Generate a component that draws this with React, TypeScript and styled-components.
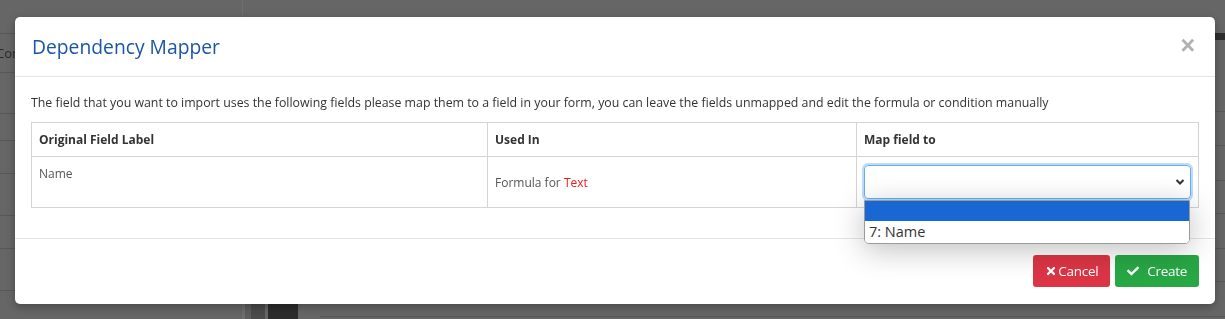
import React from 'react'
import styled, { createGlobalStyle } from 'styled-components'
import { FaTimes, FaCheck } from 'react-icons/fa'

const GlobalStyle = createGlobalStyle`
  html, body {
    margin: 0;
    padding: 0;
    background: #666;
    overflow: hidden;
  }
  body {
    font-family: "Open Sans", "Noto Sans", sans-serif;
    font-size: 12px;
    color: #333;
  }
  * { box-sizing: border-box; }
`

const leftRows = [39, 41, 27, 33, 42, 33, 42, 30]
const rightRows = [34, 35, 33, 35, 33, 35]

const App = () => {
  return (
    <>
      <GlobalStyle />
      <Page>
        <Sidebar>
          {leftRows.map((h, i) => (
            <SideRow key={i} $h={h}>{i === 0 ? 'Con' : ''}</SideRow>
          ))}
        </Sidebar>
        <Middle>
          <Blocks>
            <Block $w={2} $c="#6e6e6e" />
            <Block $w={6} $c="#5d5d5d" />
            <Block $w={14} $c="#4b4b4b" />
            <Block $w={3} $c="#666" />
            <Block $w={30} $c="#2c2c2c" />
          </Blocks>
        </Middle>
        <Main>
          <TopBar />
          <RightList>
            {rightRows.map((h, i) => (
              <RightRow key={i} $h={h} />
            ))}
          </RightList>
          <BottomLine />
        </Main>
      </Page>

      <Modal>
        <Header>
          <Title>Dependency Mapper</Title>
          <Close>×</Close>
        </Header>

        <Body>
          <Intro>
            The field that you want to import uses the following fields please map them to a field in your form, you can leave the fields unmapped and edit the formula or condition manually
          </Intro>

          <Table>
            <thead>
              <tr>
                <Th style={{ width: 456 }}>Original Field Label</Th>
                <Th style={{ width: 369 }}>Used In</Th>
                <Th>Map field to</Th>
              </tr>
            </thead>
            <tbody>
              <tr>
                <Td $align="top">Name</Td>
                <Td $align="middle">Formula for <Red>Text</Red></Td>
                <Td $align="top">
                  <SelectWrap>
                    <SelectBox>
                      <svg width="10" height="8" viewBox="0 0 10 8">
                        <path d="M1.5 2 L5 5.5 L8.5 2" fill="none" stroke="#333" strokeWidth="2" />
                      </svg>
                    </SelectBox>
                    <OptionList>
                      <Option $active />
                      <Option>7: Name</Option>
                    </OptionList>
                  </SelectWrap>
                </Td>
              </tr>
            </tbody>
          </Table>
        </Body>

        <Footer>
          <Button $color="#dc3545">
            <FaTimes size={12} />Cancel
          </Button>
          <Button $color="#28a745">
            <FaCheck size={12} style={{ marginRight: 7 }} />Create
          </Button>
        </Footer>
      </Modal>
    </>
  )
}

const Page = styled.div`
  display: flex;
  height: 319px;
  width: 1225px;
  background: #666;
`

const Sidebar = styled.div`
  width: 243px;
  padding-top: 33px;
  border-right: 1px solid #6e6e6e;
`

const SideRow = styled.div<{ $h: number }>`
  height: ${p => p.$h}px;
  border-top: 1px solid #585858;
  color: #2a2a2a;
  font-size: 13px;
  line-height: ${p => p.$h}px;
  padding-left: 0;
  margin-left: -4px;
`

const Middle = styled.div`
  width: 77px;
  display: flex;
  align-items: flex-end;
`

const Blocks = styled.div`
  display: flex;
  height: 15px;
`

const Block = styled.div<{ $w: number; $c: string }>`
  width: ${p => p.$w}px;
  background: ${p => p.$c};
`

const Main = styled.div`
  flex: 1;
  display: flex;
  flex-direction: column;
`

const TopBar = styled.div`
  margin-top: 33px;
  height: 9px;
  background: #2e2e2e;
`

const RightList = styled.div`
  margin-top: 71px;
  flex: 1;
`

const RightRow = styled.div<{ $h: number }>`
  height: ${p => p.$h}px;
  border-top: 1px solid #585858;
`

const BottomLine = styled.div`
  height: 2px;
  margin-bottom: 1px;
  border-top: 1px solid #555;
`

const Modal = styled.div`
  position: fixed;
  top: 17px;
  left: 15px;
  width: 1200px;
  height: 287px;
  background: #fff;
  border-radius: 5px;
  box-shadow: 0 3px 9px rgba(0, 0, 0, 0.3);
  display: flex;
  flex-direction: column;
`

const Header = styled.div`
  height: 60px;
  padding: 0 17px;
  display: flex;
  align-items: center;
  justify-content: space-between;
  border-bottom: 1px solid #e5e5e5;
`

const Title = styled.h4`
  margin: 0;
  font-size: 19.3px;
  font-weight: 400;
  color: #1a55a6;
`

const Close = styled.span`
  font-family: "Liberation Sans", Arial, sans-serif;
  font-size: 25px;
  font-weight: 700;
  color: #b0b0b0;
  line-height: 1;
  margin-top: -2px;
  margin-right: 3px;
`

const Body = styled.div`
  padding: 17px 16px 30px 16px;
  border-bottom: 1px solid #e5e5e5;
`

const Intro = styled.p`
  margin: 0 0 11px 0;
  line-height: 17px;
  white-space: nowrap;
  font-size: 12.35px;
`

const Table = styled.table`
  width: 1168px;
  border-collapse: collapse;
  border: 1px solid #d4d4d4;
`

const Th = styled.th`
  text-align: left;
  font-weight: 700;
  padding: 8px 7px;
  line-height: 17px;
  border: 1px solid #d4d4d4;
`

const Td = styled.td<{ $align: 'top' | 'middle' }>`
  vertical-align: ${p => p.$align};
  padding: 8px 7px;
  line-height: 17px;
  height: 48px;
  border: 1px solid #d4d4d4;
  color: #555;
`

const Red = styled.span`
  color: #f01818;
`

const SelectWrap = styled.div`
  position: relative;
  width: 327px;
`

const SelectBox = styled.div`
  height: 34px;
  border: 1px solid #66afe9;
  border-radius: 4px;
  box-shadow: 0 0 0 2px #bcdcfb;
  display: flex;
  align-items: center;
  justify-content: flex-end;
  padding-right: 5px;
`

const OptionList = styled.div`
  position: absolute;
  top: 35px;
  left: 0;
  width: 326px;
  background: #fff;
  border: 1px solid #9a9a9a;
  border-radius: 0 0 5px 5px;
  overflow: hidden;
  box-shadow: 0 6px 30px rgba(0, 0, 0, 0.25);
  z-index: 5;
`

const Option = styled.div<{ $active?: boolean }>`
  height: ${p => (p.$active ? 20 : 22)}px;
  background: ${p => (p.$active ? '#1967d2' : '#fff')};
  color: #333;
  font-size: 14.5px;
  line-height: 22px;
  padding-left: 4px;
`

const Footer = styled.div`
  flex: 1;
  display: flex;
  justify-content: flex-end;
  align-items: center;
  gap: 5px;
  padding: 0 16px 2px 0;
`

const Button = styled.button<{ $color: string }>`
  height: 32px;
  padding: 0 12px;
  border: none;
  border-radius: 3px;
  background: ${p => p.$color};
  color: #fff;
  font-family: "Open Sans", "Noto Sans", sans-serif;
  font-size: 13.5px;
  letter-spacing: -0.3px;
  display: flex;
  align-items: center;
  gap: 1px;
`

export default App
